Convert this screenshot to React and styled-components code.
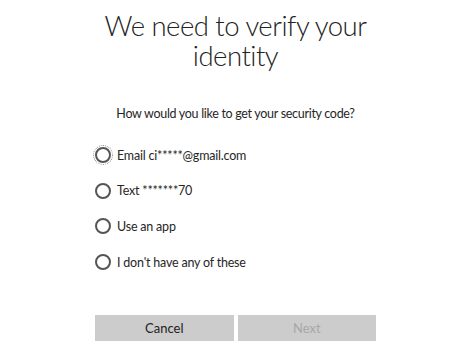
import React, { useState } from "react";
import styled, { createGlobalStyle } from "styled-components";

const GlobalStyle = createGlobalStyle`
  html, body {
    margin: 0;
    padding: 0;
    background: #ffffff;
  }
  body {
    font-family: Lato, "Open Sans", "Liberation Sans", sans-serif;
    color: #262626;
  }
`;

const Page = styled.div`
  width: 474px;
  height: 352px;
  display: flex;
  flex-direction: column;
  align-items: center;
  box-sizing: border-box;
  padding-top: 11px;
  padding-right: 3px;
`;

const Title = styled.h1`
  margin: 0;
  width: 300px;
  text-align: center;
  font-size: 27.5px;
  letter-spacing: -0.5px;
  line-height: 30px;
  font-weight: 300;
  color: #222;
`;

const Prompt = styled.p`
  margin: 34px 0 0;
  font-size: 12.5px;
  letter-spacing: -0.3px;
  line-height: 18px;
  color: #262626;
`;

const Options = styled.div`
  width: 281px;
  margin-top: 23px;
  display: flex;
  flex-direction: column;
  gap: 17.7px;
`;

const Option = styled.label`
  display: flex;
  align-items: center;
  gap: 6px;
  height: 18px;
  font-size: 12.5px;
  letter-spacing: -0.2px;
  color: #262626;
  cursor: pointer;
`;

const Circle = styled.span`
  width: 16px;
  height: 16px;
  box-sizing: border-box;
  border: 2px solid #555;
  border-radius: 50%;
  flex-shrink: 0;
  outline: ${({ $focused }) => ($focused ? "1px dotted #888" : "none")};
  outline-offset: 1px;
`;

const Buttons = styled.div`
  width: 281px;
  margin-top: auto;
  margin-bottom: 11px;
  display: flex;
  gap: 4px;
`;

const Button = styled.button`
  flex: 1;
  height: 26px;
  border: none;
  background: #cccccc;
  font-family: inherit;
  font-size: 13px;
  color: ${({ disabled }) => (disabled ? "#a8a8a8" : "#222")};
  padding: 0;
`;

const options = [
  "Email ci*****@gmail.com",
  "Text *******70",
  "Use an app",
  "I don't have any of these",
];

export default function App() {
  const [selected] = useState(null);
  return (
    <>
      <GlobalStyle />
      <Page>
        <Title>We need to verify your identity</Title>
        <Prompt>How would you like to get your security code?</Prompt>
        <Options>
          {options.map((text, i) => (
            <Option key={text}>
              <Circle $focused={i === 0} />
              {text}
            </Option>
          ))}
        </Options>
        <Buttons>
          <Button>Cancel</Button>
          <Button disabled={selected === null}>Next</Button>
        </Buttons>
      </Page>
    </>
  );
}
